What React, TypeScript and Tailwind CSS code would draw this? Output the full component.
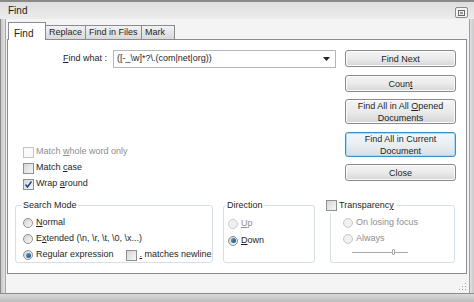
import type { ReactNode } from 'react'

const FONT = "font-['Liberation_Sans',Arial,sans-serif]"

function Checkbox({ checked = false, disabled = false }: { checked?: boolean; disabled?: boolean }) {
  return (
    <span
      className={`relative flex h-[11px] w-[11px] shrink-0 items-center justify-center border ${
        disabled ? 'border-[#c4c4c4] bg-[#fafafa]' : 'border-[#8e8f8f] bg-gradient-to-br from-[#d6d6d6] to-[#f7f7f7]'
      }`}
    >
      {checked && (
        <svg width="9" height="9" viewBox="0 0 9 9">
          <path d="M1.5 4.5 L3.5 7 L7.5 1.5" fill="none" stroke="#1f3f7a" strokeWidth="1.4" />
        </svg>
      )}
    </span>
  )
}

function Radio({ checked = false, disabled = false }: { checked?: boolean; disabled?: boolean }) {
  return (
    <span
      className={`flex h-[10px] w-[10px] shrink-0 items-center justify-center rounded-full border ${
        disabled ? 'border-[#c9c9c9] bg-[#f0f0f0]' : 'border-[#8e8f8f] bg-gradient-to-br from-[#d2d2d2] to-[#fbfbfb]'
      }`}
    >
      {checked && <span className="h-[5px] w-[5px] rounded-full bg-gradient-to-br from-[#5aa3d4] to-[#1b4b74]" />}
    </span>
  )
}

function Button({ children, focused = false, tall = false }: { children: ReactNode; focused?: boolean; tall?: boolean }) {
  return (
    <div
      className={`flex w-[111px] items-center justify-center rounded-[3px] border text-center leading-[12px] ${
        tall ? 'h-[25px]' : 'h-[17px]'
      } ${
        focused
          ? 'border-[#3c8fc4] bg-gradient-to-b from-[#f3f7fa] via-[#e9eef2] to-[#d8dfe5] shadow-[inset_0_0_0_1px_#a9dcf4]'
          : 'border-[#8a8a8a] bg-gradient-to-b from-[#f4f4f4] via-[#ebebeb] to-[#d6d6d6] shadow-[inset_0_0_0_1px_#fbfbfb]'
      }`}
    >
      <span>{children}</span>
    </div>
  )
}

function Group({ title, className, children }: { title: ReactNode; className: string; children: ReactNode }) {
  return (
    <div className={`relative h-[58px] shrink-0 rounded-[3px] border border-[#d5dfe5] ${className}`}>
      {title}
      {children}
    </div>
  )
}

export default function App() {
  return (
    <div className={`${FONT} flex h-[302px] w-[474px] flex-col overflow-hidden whitespace-nowrap bg-[#d6d6d6] text-[9px] text-[#1e1e1e]`}>
      {/* title bar */}
      <div className="flex h-[19px] shrink-0 items-center border-t-2 border-[#8a8a8a] bg-gradient-to-b from-[#dedede] to-[#ececec] pl-[8px] pr-[6px]">
        <span className="text-[10px]">Find</span>
        <div className="ml-auto mt-[4px] flex h-[11px] w-[13px] items-center justify-center rounded-[2px] border border-[#8a8a8a] bg-[#f4f4f4]">
          <svg width="7" height="6" viewBox="0 0 7 6">
            <rect x="0.5" y="0.5" width="6" height="5" fill="none" stroke="#666" />
            <path d="M2 2 L5 4 M5 2 L2 4" stroke="#666" strokeWidth="0.8" />
          </svg>
        </div>
      </div>

      {/* body with frame */}
      <div className="flex h-[274px] shrink-0 border-l border-[#8a8a8a]">
        <div className="w-[4px] bg-gradient-to-r from-[#c8c8c8] to-[#e2e2e2]" />
        <div className="flex w-[464px] flex-col border-l border-[#a8a8a8] bg-[#f4f4f4]">
          {/* tabs */}
          <div className="flex h-[20px] shrink-0 items-end pl-[2px] pt-[3px]">
            <div className="relative z-10 -mb-px flex h-[18px] w-[38px] items-start border border-b-0 border-[#898c95] bg-white pl-[5px] pt-[3px] text-[10px]">
              Find
            </div>
            <div className="flex h-[14px] w-[40px] items-center border border-b-0 border-l-0 border-[#898c95] bg-gradient-to-b from-[#f2f2f2] to-[#d9d9d9] pl-[3px]">
              Replace
            </div>
            <div className="flex h-[14px] w-[56px] items-center border border-b-0 border-l-0 border-[#898c95] bg-gradient-to-b from-[#f2f2f2] to-[#d9d9d9] pl-[3px]">
              Find in Files
            </div>
            <div className="flex h-[14px] w-[33px] items-center border border-b-0 border-l-0 border-[#898c95] bg-gradient-to-b from-[#f2f2f2] to-[#d9d9d9] pl-[3px]">
              Mark
            </div>
          </div>

          {/* tab page */}
          <div className="ml-[1px] flex h-[235px] w-[460px] shrink-0 flex-col border border-[#898c95] bg-white">
            <div className="flex h-[152px]">
              <div className="flex flex-1 flex-col">
                <div className="mt-[10px] flex h-[18px] items-center">
                  <span className="w-[100px] pr-[1px] text-right">
                    <u>F</u>ind what :
                  </span>
                  <div className="ml-[5px] flex h-[18px] w-[223px] items-center border border-[#b4b7bd] bg-white pl-[3px] pr-[5px]">
                    <span>([-_\w]*?\.(com|net|org))</span>
                    <svg className="ml-auto" width="7" height="4" viewBox="0 0 7 4">
                      <path d="M0 0 H7 L3.5 4 Z" fill="#222" />
                    </svg>
                  </div>
                </div>

                <div className="mt-[76px] flex flex-col pl-[15px]">
                  <div className="flex h-[16px] items-center gap-[2px] text-[#8e8e8e]">
                    <Checkbox disabled />
                    <span>
                      Match <u>w</u>hole word only
                    </span>
                  </div>
                  <div className="flex h-[16px] items-center gap-[2px]">
                    <Checkbox />
                    <span>
                      Match <u>c</u>ase
                    </span>
                  </div>
                  <div className="flex h-[16px] items-center gap-[2px]">
                    <Checkbox checked />
                    <span>
                      Wrap <u>a</u>round
                    </span>
                  </div>
                </div>
              </div>

              <div className="mr-[10px] mt-[10px] flex w-[111px] flex-col">
                <Button>Find Next</Button>
                <div className="mt-[8px]">
                  <Button>
                    Coun<u>t</u>
                  </Button>
                </div>
                <div className="mt-[7px]">
                  <Button tall>
                    Find All in All <u>O</u>pened
                    <br />
                    Documents
                  </Button>
                </div>
                <div className="mt-[8px]">
                  <Button tall focused>
                    Find All in Current
                    <br />
                    Document
                  </Button>
                </div>
                <div className="mt-[7px]">
                  <Button>Close</Button>
                </div>
              </div>
            </div>

            {/* group boxes */}
            <div className="mt-[13px] flex pl-[7px]">
              <Group
                className="w-[198px]"
                title={<span className="absolute -top-[7px] left-[6px] bg-white px-[1px]">Search Mode</span>}
              >
                <div className="mt-[9px] flex flex-col pl-[7px]">
                  <div className="flex h-[16px] items-center gap-[3px]">
                    <Radio />
                    <span>
                      <u>N</u>ormal
                    </span>
                  </div>
                  <div className="flex h-[16px] items-center gap-[3px]">
                    <Radio />
                    <span>
                      E<u>x</u>tended (\n, \r, \t, \0, \x...)
                    </span>
                  </div>
                  <div className="flex h-[16px] items-center gap-[3px]">
                    <Radio checked />
                    <span>Regular expression</span>
                    <span className="ml-[9px]">
                      <Checkbox />
                    </span>
                    <span>
                      <u>.</u> matches newline
                    </span>
                  </div>
                </div>
              </Group>

              <Group
                className="ml-[10px] w-[92px]"
                title={<span className="absolute -top-[7px] left-[2px] bg-white px-[1px]">Direction</span>}
              >
                <div className="mt-[9px] flex flex-col pl-[4px]">
                  <div className="flex h-[17px] items-center gap-[3px] text-[#8e8e8e]">
                    <Radio disabled />
                    <span>
                      <u>U</u>p
                    </span>
                  </div>
                  <div className="flex h-[17px] items-center gap-[3px]">
                    <Radio checked />
                    <span>
                      <u>D</u>own
                    </span>
                  </div>
                </div>
              </Group>

              <Group
                className="ml-[15px] w-[125px]"
                title={
                  <span className="absolute -left-[5px] -top-[7px] flex items-center gap-[2px] bg-white pr-[2px]">
                    <Checkbox />
                    <span>
                      Transparenc<u>y</u>
                    </span>
                  </span>
                }
              >
                <div className="mt-[9px] flex flex-col pl-[12px] text-[#8e8e8e]">
                  <div className="flex h-[16px] items-center gap-[3px]">
                    <Radio disabled />
                    <span>On losing focus</span>
                  </div>
                  <div className="flex h-[16px] items-center gap-[3px]">
                    <Radio disabled />
                    <span>Always</span>
                  </div>
                  <div className="ml-[9px] mt-[2px] flex h-[6px] w-[56px] items-center">
                    <div className="h-px w-[40px] bg-[#a8a8a8]" />
                    <div className="h-[6px] w-[3px] rounded-[1px] border border-[#a8a8a8] bg-white" />
                    <div className="h-px flex-1 bg-[#a8a8a8]" />
                  </div>
                </div>
              </Group>
            </div>
          </div>

          {/* status strip */}
          <div className="flex flex-1 items-end justify-end pb-[2px] pr-[2px]">
            <svg width="8" height="8" viewBox="0 0 8 8">
              <rect x="6" y="6" width="1" height="1" fill="#9a9a9a" />
              <rect x="3" y="6" width="1" height="1" fill="#9a9a9a" />
              <rect x="6" y="3" width="1" height="1" fill="#9a9a9a" />
              <rect x="0" y="6" width="1" height="1" fill="#9a9a9a" />
              <rect x="3" y="3" width="1" height="1" fill="#9a9a9a" />
              <rect x="6" y="0" width="1" height="1" fill="#9a9a9a" />
            </svg>
          </div>
        </div>
        <div className="flex-1 border-l border-[#a0a0a0] bg-gradient-to-r from-[#e2e2e2] to-[#c8c8c8]" />
      </div>

      {/* bottom frame */}
      <div className="flex-1 border-t border-[#8a8a8a] bg-gradient-to-b from-[#dadada] to-[#bdbdbd]" />
    </div>
  )
}
